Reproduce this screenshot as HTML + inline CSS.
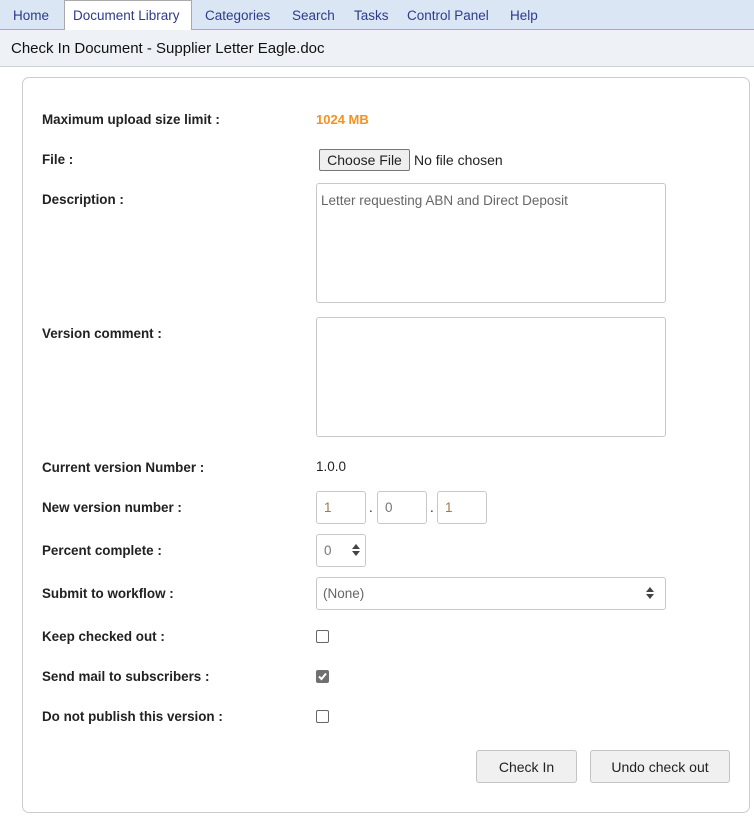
<!DOCTYPE html>
<html><head><meta charset="utf-8"><style>
*{box-sizing:border-box;margin:0;padding:0}
body{width:754px;height:816px;background:#fff;font-family:"Liberation Sans",sans-serif;position:relative;overflow:hidden;color:#222}
.nav{position:absolute;left:0;top:0;width:754px;height:30px;background:#dbe6f5;border-bottom:1px solid #a9a9a9}
.nav span{position:absolute;top:8px;font-size:13.5px;color:#2e3a8c}
.tab{position:absolute;left:64px;top:0;width:128px;height:31px;background:#fff;border:1px solid #a9a9a9;border-bottom:none}
.hdr{position:absolute;left:0;top:30px;width:754px;height:37px;background:#eef2f6;border-bottom:1px solid #d0d0d0;font-size:15px;color:#111;padding:10px 0 0 11px}
.panel{position:absolute;left:22px;top:77px;width:728px;height:736px;border:1px solid #ccc;border-radius:7px}
.l{position:absolute;left:42px;font-size:13.4px;font-weight:bold;color:#222}
.v{position:absolute;font-size:13.5px}
.box{position:absolute;border:1px solid #c8c8c8;border-radius:3px;background:#fff}
.cb{position:absolute;left:316px;width:13px;height:13px;border:1px solid #666;border-radius:2px;background:#fff}
.btn{position:absolute;top:750px;height:33px;background:#f0f0f0;border:1px solid #c4c4c4;border-radius:3px;font-size:14px;text-align:center;line-height:32px;color:#222}
.arr{position:absolute;width:0;height:0;border-left:4px solid transparent;border-right:4px solid transparent}
.num{padding:8px 7px;font-size:13.5px;color:#a07850}
</style></head><body>
<div class="nav">
<span style="left:13px">Home</span>
<div class="tab"></div>
<span style="left:73px">Document Library</span>
<span style="left:205px">Categories</span>
<span style="left:292px">Search</span>
<span style="left:354px">Tasks</span>
<span style="left:407px">Control Panel</span>
<span style="left:510px">Help</span>
</div>
<div class="hdr">Check In Document - Supplier Letter Eagle.doc</div>
<div class="panel"></div>

<div class="l" style="top:112px">Maximum upload size limit :</div>
<div class="v" style="left:316px;top:112px;color:#f7901e;font-weight:bold;font-size:13px">1024 MB</div>

<div class="l" style="top:152px">File :</div>
<div style="position:absolute;left:319px;top:149px;width:91px;height:22px;background:#efefef;border:1px solid #767676;border-radius:2px;font-size:14px;text-align:center;line-height:20px">Choose File</div>
<div class="v" style="left:414px;top:152px;font-size:14px">No file chosen</div>

<div class="l" style="top:192px">Description :</div>
<div class="box" style="left:316px;top:183px;width:350px;height:120px;padding:9px 4px;font-size:13.5px;color:#666">Letter requesting ABN and Direct Deposit</div>

<div class="l" style="top:326px">Version comment :</div>
<div class="box" style="left:316px;top:317px;width:350px;height:120px"></div>

<div class="l" style="top:460px">Current version Number :</div>
<div class="v" style="left:316px;top:459px">1.0.0</div>

<div class="l" style="top:500px">New version number :</div>
<div class="box num" style="left:316px;top:491px;width:50px;height:33px">1</div>
<div class="v" style="left:369px;top:500px">.</div>
<div class="box num" style="left:377px;top:491px;width:50px;height:33px;color:#777">0</div>
<div class="v" style="left:430px;top:500px">.</div>
<div class="box num" style="left:437px;top:491px;width:50px;height:33px">1</div>

<div class="l" style="top:543px">Percent complete :</div>
<div class="box num" style="left:316px;top:534px;width:50px;height:33px;color:#777">0</div>
<div class="arr" style="left:352px;top:544px;border-bottom:5px solid #444"></div>
<div class="arr" style="left:352px;top:551px;border-top:5px solid #444"></div>

<div class="l" style="top:586px">Submit to workflow :</div>
<div class="box" style="left:316px;top:577px;width:350px;height:33px;padding:8px 6px;font-size:13.5px;color:#666">(None)</div>
<div class="arr" style="left:646px;top:587px;border-bottom:5px solid #444"></div>
<div class="arr" style="left:646px;top:594px;border-top:5px solid #444"></div>

<div class="l" style="top:629px">Keep checked out :</div>
<div class="cb" style="top:630px"></div>

<div class="l" style="top:669px">Send mail to subscribers :</div>
<div class="cb" style="top:670px;background:#707070;border-color:#707070"><svg width="11" height="11" viewBox="0 0 11 11" style="position:absolute;left:0;top:0"><path d="M2 5.5 L4.5 8 L9 2.5" stroke="#fff" stroke-width="2" fill="none"/></svg></div>

<div class="l" style="top:709px">Do not publish this version :</div>
<div class="cb" style="top:710px"></div>

<div class="btn" style="left:476px;width:101px">Check In</div>
<div class="btn" style="left:590px;width:140px">Undo check out</div>
</body></html>
